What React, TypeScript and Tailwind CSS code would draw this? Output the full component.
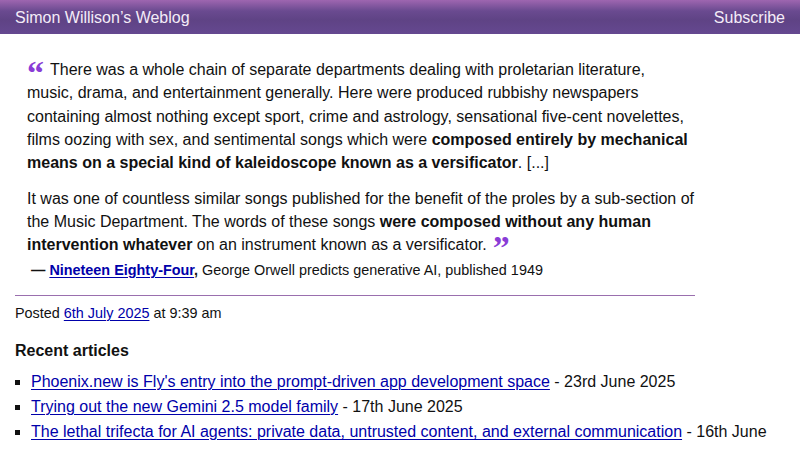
import React from "react";

const link = "text-[#0000aa] underline decoration-1 underline-offset-2";
const q = "font-['Liberation_Serif','Times_New_Roman',serif] font-bold text-[34px] leading-[0] text-[#8a3cd6] relative top-[9px]";

export default function App() {
  return (
    <div className="min-h-[450px] bg-white text-[#111] font-['Liberation_Sans',Arial,sans-serif]">
      <header className="h-[34px] flex items-center justify-between px-[15px] text-[16px] text-white bg-[linear-gradient(to_bottom,#9e66b0_0px,#6a4a90_11px,#5f4385_20px,#654890_34px)]">
        <span className="text-[#f4ecf8] relative top-[1px]">Simon Willison’s Weblog</span>
        <span className="text-[#f4ecf8] relative top-[1px]">Subscribe</span>
      </header>
      <div className="px-[15px]">
        <div className="w-[680px]">
          <blockquote className="ml-[12px] mt-[24px] text-[16px] leading-[23.3px]">
            <p>
              <span className={q + " mr-[6px]"}>“</span>
              There was a whole chain of separate departments dealing with proletarian literature, music, drama, and entertainment generally. Here were produced rubbishy newspapers containing almost nothing except sport, crime and astrology, sensational five-cent novelettes, films oozing with sex, and sentimental songs which were <strong>composed entirely by mechanical means on a special kind of kaleidoscope known as a versificator</strong>. [...]
            </p>
            <p className="mt-[12.4px]">
              It was one of countless similar songs published for the benefit of the proles by a sub-section of the Music Department. The words of these songs <strong>were composed without any human intervention whatever</strong> on an instrument known as a versificator.
              <span className={q + " ml-[6px]"}>”</span>
            </p>
          </blockquote>
          <p className="mt-[3px] ml-[16px] text-[14.4px] leading-[20px]">
            <strong>— </strong>
            <a className={link + " font-bold"} href="#">Nineteen Eighty-Four</a>
            <strong>,</strong> George Orwell predicts generative AI, published 1949
          </p>
          <div className="mt-[15px] h-px bg-[#9a6fae]" />
          <p className="mt-[7px] text-[14.4px] leading-[20px]">
            Posted <a className={link} href="#">6th July 2025</a> at 9:39 am
          </p>
        </div>
        <h2 className="mt-[16px] text-[16px] leading-[24px] font-bold">Recent articles</h2>
        <ul className="mt-[6px] pl-[16px] list-[square] text-[16px] leading-[25px]">
          <li>
            <a className={link} href="#">Phoenix.new is Fly's entry into the prompt-driven app development space</a> - 23rd June 2025
          </li>
          <li>
            <a className={link} href="#">Trying out the new Gemini 2.5 model family</a> - 17th June 2025
          </li>
          <li>
            <a className={link} href="#">The lethal trifecta for AI agents: private data, untrusted content, and external communication</a> - 16th June 2025
          </li>
        </ul>
      </div>
    </div>
  );
}
